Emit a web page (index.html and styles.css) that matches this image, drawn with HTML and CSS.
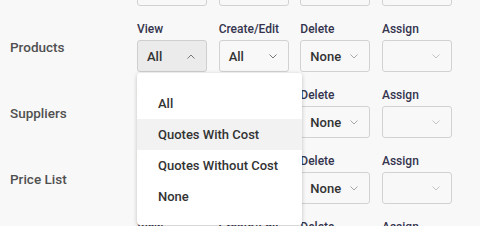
FILE: index.html
```html
<html><head>
	<meta charset="utf-8">
	<title>Permissions</title>
	<link rel="stylesheet" href="styles.css">
</head>
<body>
	<div class="perms">
		<!-- row scrolled above the view -->
		<div class="row">
			<div class="row-name">Customers</div>
			<div class="fields">
				<div class="field">
					<div class="field-label">View</div>
					<div class="select"><span>All</span><svg class="chev dark" width="8" height="5" viewBox="0 0 8 5"><polyline points="0.5,0.5 4,4 7.5,0.5"/></svg></div>
				</div>
				<div class="field">
					<div class="field-label">Create/Edit</div>
					<div class="select"><span>All</span><svg class="chev dark" width="8" height="5" viewBox="0 0 8 5"><polyline points="0.5,0.5 4,4 7.5,0.5"/></svg></div>
				</div>
				<div class="field">
					<div class="field-label">Delete</div>
					<div class="select"><span>None</span><svg class="chev" width="8" height="5" viewBox="0 0 8 5"><polyline points="0.5,0.5 4,4 7.5,0.5"/></svg></div>
				</div>
				<div class="field">
					<div class="field-label">Assign</div>
					<div class="select"><span></span><svg class="chev light" width="8" height="5" viewBox="0 0 8 5"><polyline points="0.5,0.5 4,4 7.5,0.5"/></svg></div>
				</div>
			</div>
		</div>

		<div class="row">
			<div class="row-name">Products</div>
			<div class="fields">
				<div class="field">
					<div class="field-label">View</div>
					<div class="select open"><span>All</span><svg class="chev dark" width="8" height="5" viewBox="0 0 8 5"><polyline points="0.5,4.5 4,1 7.5,4.5"/></svg></div>
					<!-- open dropdown -->
					<ul class="menu">
						<li>All</li>
						<li class="hover">Quotes With Cost</li>
						<li>Quotes Without Cost</li>
						<li>None</li>
					</ul>
				</div>
				<div class="field">
					<div class="field-label">Create/Edit</div>
					<div class="select"><span>All</span><svg class="chev dark" width="8" height="5" viewBox="0 0 8 5"><polyline points="0.5,0.5 4,4 7.5,0.5"/></svg></div>
				</div>
				<div class="field">
					<div class="field-label">Delete</div>
					<div class="select"><span>None</span><svg class="chev" width="8" height="5" viewBox="0 0 8 5"><polyline points="0.5,0.5 4,4 7.5,0.5"/></svg></div>
				</div>
				<div class="field">
					<div class="field-label">Assign</div>
					<div class="select"><span></span><svg class="chev light" width="8" height="5" viewBox="0 0 8 5"><polyline points="0.5,0.5 4,4 7.5,0.5"/></svg></div>
				</div>
			</div>
		</div>

		<div class="row">
			<div class="row-name">Suppliers</div>
			<div class="fields">
				<div class="field">
					<div class="field-label">View</div>
					<div class="select"><span>All</span><svg class="chev dark" width="8" height="5" viewBox="0 0 8 5"><polyline points="0.5,0.5 4,4 7.5,0.5"/></svg></div>
				</div>
				<div class="field">
					<div class="field-label">Create/Edit</div>
					<div class="select"><span>All</span><svg class="chev dark" width="8" height="5" viewBox="0 0 8 5"><polyline points="0.5,0.5 4,4 7.5,0.5"/></svg></div>
				</div>
				<div class="field">
					<div class="field-label">Delete</div>
					<div class="select"><span>None</span><svg class="chev" width="8" height="5" viewBox="0 0 8 5"><polyline points="0.5,0.5 4,4 7.5,0.5"/></svg></div>
				</div>
				<div class="field">
					<div class="field-label">Assign</div>
					<div class="select"><span></span><svg class="chev light" width="8" height="5" viewBox="0 0 8 5"><polyline points="0.5,0.5 4,4 7.5,0.5"/></svg></div>
				</div>
			</div>
		</div>

		<div class="row">
			<div class="row-name">Price List</div>
			<div class="fields">
				<div class="field">
					<div class="field-label">View</div>
					<div class="select"><span>All</span><svg class="chev dark" width="8" height="5" viewBox="0 0 8 5"><polyline points="0.5,0.5 4,4 7.5,0.5"/></svg></div>
				</div>
				<div class="field">
					<div class="field-label">Create/Edit</div>
					<div class="select"><span>All</span><svg class="chev dark" width="8" height="5" viewBox="0 0 8 5"><polyline points="0.5,0.5 4,4 7.5,0.5"/></svg></div>
				</div>
				<div class="field">
					<div class="field-label">Delete</div>
					<div class="select"><span>None</span><svg class="chev" width="8" height="5" viewBox="0 0 8 5"><polyline points="0.5,0.5 4,4 7.5,0.5"/></svg></div>
				</div>
				<div class="field">
					<div class="field-label">Assign</div>
					<div class="select"><span></span><svg class="chev light" width="8" height="5" viewBox="0 0 8 5"><polyline points="0.5,0.5 4,4 7.5,0.5"/></svg></div>
				</div>
			</div>
		</div>

		<div class="row">
			<div class="row-name">Projects</div>
			<div class="fields">
				<div class="field">
					<div class="field-label">View</div>
					<div class="select"><span>All</span><svg class="chev dark" width="8" height="5" viewBox="0 0 8 5"><polyline points="0.5,0.5 4,4 7.5,0.5"/></svg></div>
				</div>
				<div class="field">
					<div class="field-label">Create/Edit</div>
					<div class="select"><span>All</span><svg class="chev dark" width="8" height="5" viewBox="0 0 8 5"><polyline points="0.5,0.5 4,4 7.5,0.5"/></svg></div>
				</div>
				<div class="field">
					<div class="field-label">Delete</div>
					<div class="select"><span>None</span><svg class="chev" width="8" height="5" viewBox="0 0 8 5"><polyline points="0.5,0.5 4,4 7.5,0.5"/></svg></div>
				</div>
				<div class="field">
					<div class="field-label">Assign</div>
					<div class="select"><span></span><svg class="chev light" width="8" height="5" viewBox="0 0 8 5"><polyline points="0.5,0.5 4,4 7.5,0.5"/></svg></div>
				</div>
			</div>
		</div>
	</div>
</body></html>
```

FILE: styles.css
```css
* {
	margin: 0;
	padding: 0;
	box-sizing: border-box;
}

ul {
	list-style: none;
}

body {
	font-family: Roboto, "Liberation Sans", sans-serif;
	background: #f8f8f8;
	color: #333;
	overflow: hidden;
}

/* list is scrolled a bit, first row sits above the top edge */
.perms {
	margin-top: -44px;
}

.row {
	display: flex;
	align-items: center;
	margin-bottom: 16px;
}

.row-name {
	width: 137px;
	padding-left: 10px;
	font-size: 13.5px;
	font-weight: 500;
	color: #505050;
}

.fields {
	display: grid;
	grid-template-columns: repeat(4, 70px);
	column-gap: 11.67px;
}

.field {
	position: relative;
}

.field-label {
	font-size: 12px;
	font-weight: 500;
	line-height: 14px;
	color: #34344e;
	margin-bottom: 4px;
	white-space: nowrap;
}

.select {
	height: 32px;
	border: 1px solid #d2d2d2;
	border-radius: 3px;
	background: #f8f8f8;
	display: flex;
	align-items: center;
	justify-content: space-between;
	padding: 0 11px 0 9px;
	font-size: 13px;
	font-weight: 500;
	color: #333;
}

.select.open {
	background: #ebebeb;
	border-color: #cfcfcf;
}

.chev {
	fill: none;
	stroke: #a8a8a8;
	stroke-width: 1;
}
.chev.dark {
	stroke: #777;
}
.chev.light {
	stroke: #c4c4c4;
}

.menu {
	position: absolute;
	top: 51px;
	left: 0;
	width: 165px;
	padding: 15px 0 13px;
	background: #fff;
	border-radius: 3px;
	box-shadow: 0 1px 4px rgba(0,0,0,0.22);
	z-index: 10;
}

.menu li {
	height: 31px;
	line-height: 31px;
	padding-left: 21px;
	font-size: 13px;
	font-weight: 500;
	color: #333;
	white-space: nowrap;
}

.menu li.hover {
	background: #f2f2f2;
}
```
